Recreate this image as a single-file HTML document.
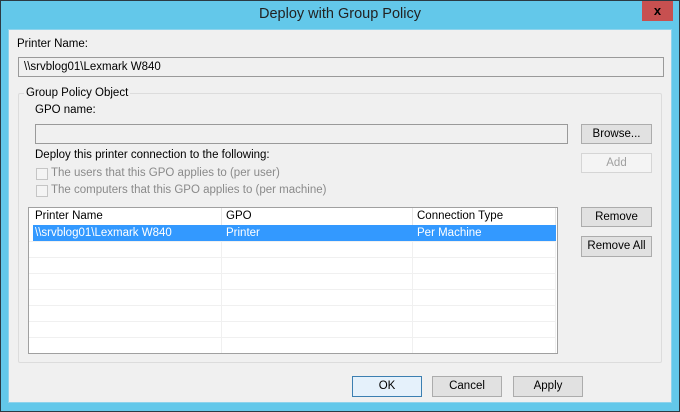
<!DOCTYPE html><html><head><style>
body{margin:0;width:680px;height:412px;overflow:hidden;background:#63c8ea;font-family:"Liberation Sans",sans-serif;font-size:11.5px;color:#000;position:relative}
.a{position:absolute}
.frame{left:0;top:0;width:678px;height:410px;border:1px solid #2b3a44;background:#63c8ea}
.client{left:8px;top:29px;width:664px;height:374px;background:#f0f0f0;border:1px solid #8fd3ec;box-sizing:border-box}
.tb{border:1px solid #abadb3;background:#f0f0f0;box-sizing:border-box}
.btn{border:1px solid #acacac;background:#e1e1e1;box-sizing:border-box;text-align:center;line-height:18px}
.dis{color:#a0a0a0;background:#f4f4f4;border-color:#d5d5d5}
.cb{width:12px;height:12px;border:1px solid #c5c5c5;background:#f4f4f4;box-sizing:border-box}
.g{color:#8a8a8a}
</style></head><body>
<div class="a frame"></div>
<div class="a" style="left:0;top:6px;width:680px;text-align:center;font-size:14.5px;color:#222">Deploy with Group Policy</div>
<div class="a" style="left:642px;top:1px;width:31px;height:20px;background:#c75050;color:#000;text-align:center;font-weight:bold;font-size:13px;line-height:19px">x</div>
<div class="a client"></div>
<div class="a" style="left:17px;top:38px">Printer Name:</div>
<div class="a tb" style="left:18px;top:57px;width:646px;height:20px;padding:3px 5px;border-color:#9a9a9a">\\srvblog01\Lexmark W840</div>
<div class="a" style="left:18px;top:93px;width:644px;height:270px;border:1px solid #dcdcdc;border-radius:2px;box-sizing:border-box"></div>
<div class="a" style="left:24px;top:87px;background:#f0f0f0;padding:0 2px">Group Policy Object</div>
<div class="a" style="left:35px;top:104px">GPO name:</div>
<div class="a tb" style="left:35px;top:124px;width:533px;height:20px;border-color:#9a9a9a"></div>
<div class="a btn" style="left:581px;top:124px;width:71px;height:20px">Browse...</div>
<div class="a btn dis" style="left:581px;top:153px;width:71px;height:20px">Add</div>
<div class="a" style="left:35px;top:149px">Deploy this printer connection to the following:</div>
<div class="a cb" style="left:36px;top:168px"></div><div class="a g" style="left:51px;top:167px">The users that this GPO applies to (per user)</div>
<div class="a cb" style="left:36px;top:185px"></div><div class="a g" style="left:51px;top:184px">The computers that this GPO applies to (per machine)</div>
<div class="a" style="left:28px;top:207px;width:530px;height:147px;border:1px solid #a0a0a0;background:#fff;box-sizing:border-box;overflow:hidden">
<svg class="a" style="left:0;top:0" width="530" height="147">
<g stroke="#f0f0f0"><line x1="0" y1="33.5" x2="527" y2="33.5"/><line x1="0" y1="49.5" x2="527" y2="49.5"/><line x1="0" y1="65.5" x2="527" y2="65.5"/><line x1="0" y1="81.5" x2="527" y2="81.5"/><line x1="0" y1="97.5" x2="527" y2="97.5"/><line x1="0" y1="113.5" x2="527" y2="113.5"/><line x1="0" y1="129.5" x2="527" y2="129.5"/>
<line x1="192.5" y1="0" x2="192.5" y2="147"/><line x1="383.5" y1="0" x2="383.5" y2="147"/><line x1="526.5" y1="0" x2="526.5" y2="147"/></g>
<rect x="4" y="17" width="523" height="16" fill="#3399ff"/>
<g stroke="#e5e5e5"><line x1="192.5" y1="0" x2="192.5" y2="17"/><line x1="383.5" y1="0" x2="383.5" y2="17"/><line x1="526.5" y1="0" x2="526.5" y2="17"/></g>
</svg>
<div class="a" style="left:6px;top:2px">Printer Name</div><div class="a" style="left:197px;top:2px">GPO</div><div class="a" style="left:388px;top:2px">Connection Type</div>
<div class="a" style="left:6px;top:19px;color:#fff">\\srvblog01\Lexmark W840</div><div class="a" style="left:197px;top:19px;color:#fff">Printer</div><div class="a" style="left:388px;top:19px;color:#fff">Per Machine</div>
</div>
<div class="a btn" style="left:581px;top:207px;width:71px;height:20px">Remove</div>
<div class="a btn" style="left:581px;top:236px;width:71px;height:21px">Remove All</div>
<div class="a btn" style="left:352px;top:376px;width:70px;height:21px;border-color:#3c7fb1;background:#e5f1fb">OK</div>
<div class="a btn" style="left:432px;top:376px;width:70px;height:21px">Cancel</div>
<div class="a btn" style="left:513px;top:376px;width:70px;height:21px">Apply</div>
</body></html>
